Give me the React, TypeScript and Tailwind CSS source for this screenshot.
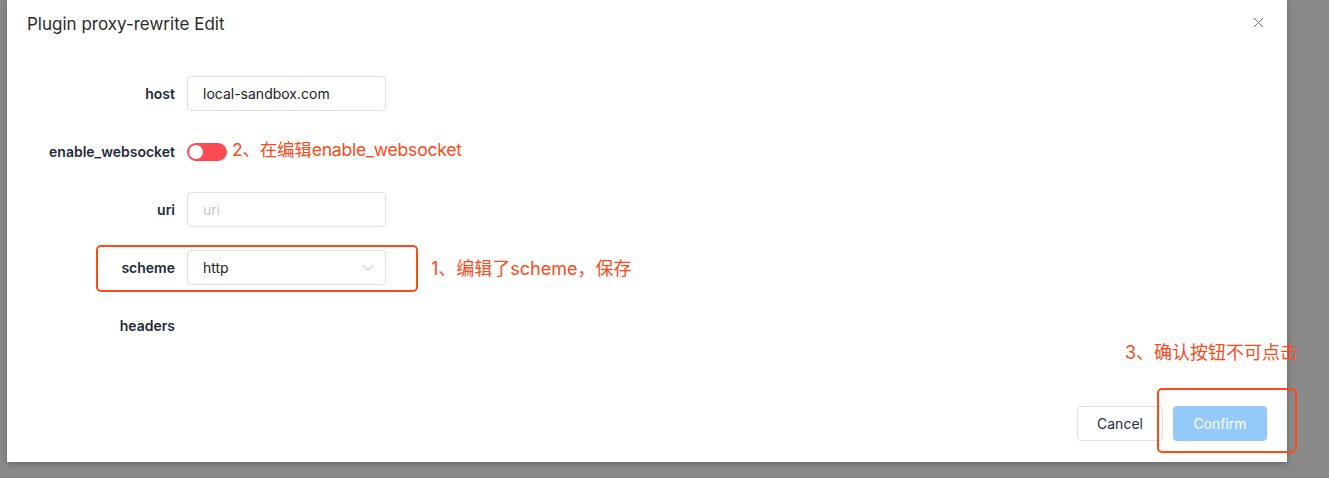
import { ChevronDown, X } from "lucide-react";

const font = "font-['Inter','Noto_Sans_CJK_SC',sans-serif]";

function Label({ children }: { children: string }) {
  return (
    <div className="w-[180px] pr-3 text-right text-[14px] font-semibold text-[#222b38]">
      {children}
    </div>
  );
}

export default function App() {
  return (
    <div className={`relative h-[478px] w-[1329px] overflow-hidden bg-[#898989] ${font}`}>
      {/* modal */}
      <div className="ml-[7px] flex h-[462px] w-[1280px] flex-col bg-white shadow-[0_2px_6px_rgba(0,0,0,0.25)]">
        <div className="flex h-[48px] items-center justify-between pl-[20px] pr-[20px] pt-[1px]">
          <span className="text-[17px] text-[#2b2b2b]">Plugin proxy-rewrite Edit</span>
          <X className="-mt-[5px] h-[17px] w-[17px] text-[#6b6b6b]" strokeWidth={1.3} />
        </div>

        <div className="mt-[28px] flex flex-col gap-[23px]">
          <div className="flex h-[35px] items-center">
            <Label>host</Label>
            <div className="flex h-[35px] w-[199px] items-center rounded-[4px] border border-[#dcdfe6] px-[15px] text-[14px] text-[#222]">
              local-sandbox.com
            </div>
          </div>

          <div className="flex h-[35px] items-center">
            <Label>enable_websocket</Label>
            <div className="flex h-[18px] w-[40px] items-center rounded-full bg-[#fc4b52] pl-[2px]">
              <div className="h-[14px] w-[14px] rounded-full bg-white" />
            </div>
          </div>

          <div className="flex h-[35px] items-center">
            <Label>uri</Label>
            <div className="flex h-[35px] w-[199px] items-center rounded-[4px] border border-[#dcdfe6] px-[15px] text-[14px] text-[#c5c8ce]">
              uri
            </div>
          </div>

          <div className="flex h-[35px] items-center">
            <Label>scheme</Label>
            <div className="flex h-[35px] w-[199px] items-center justify-between rounded-[4px] border border-[#dcdfe6] pl-[15px] pr-[9px] text-[14px] text-[#222]">
              http
              <ChevronDown className="h-[16px] w-[16px] text-[#c0c4cc]" strokeWidth={1.3} />
            </div>
          </div>

          <div className="flex h-[35px] items-center">
            <Label>headers</Label>
          </div>
        </div>

        <div className="mt-auto mb-[21px] flex justify-end gap-[10px] pr-[20px]">
          <button className="h-[35px] w-[86px] rounded-[4px] border border-[#dcdfe6] bg-white text-[14px] text-[#222b38]">
            Cancel
          </button>
          <button className="h-[35px] w-[94px] rounded-[4px] bg-[#94cafb] text-[14px] text-white">
            Confirm
          </button>
        </div>
      </div>

      {/* annotations */}
      <span className="absolute left-[232px] top-[139px] text-[17.5px] leading-[22px] tracking-[-0.2px] text-[#fc4a1a]">
        2、在编辑enable_websocket
      </span>
      <div className="absolute left-[96px] top-[245px] h-[47px] w-[322px] rounded-[5px] border-[2.5px] border-[#fc4a1a]" />
      <span className="absolute left-[431px] top-[258px] text-[18px] leading-[22px] text-[#fc4a1a]">
        1、编辑了scheme，保存
      </span>
      <span className="absolute left-[1125px] top-[342px] text-[18px] leading-[22px] text-[#fc4a1a]">
        3、确认按钮不可点击
      </span>
      <div className="absolute left-[1157px] top-[388px] h-[65px] w-[140px] rounded-[5px] border-[2.5px] border-[#fc4a1a]" />
    </div>
  );
}
